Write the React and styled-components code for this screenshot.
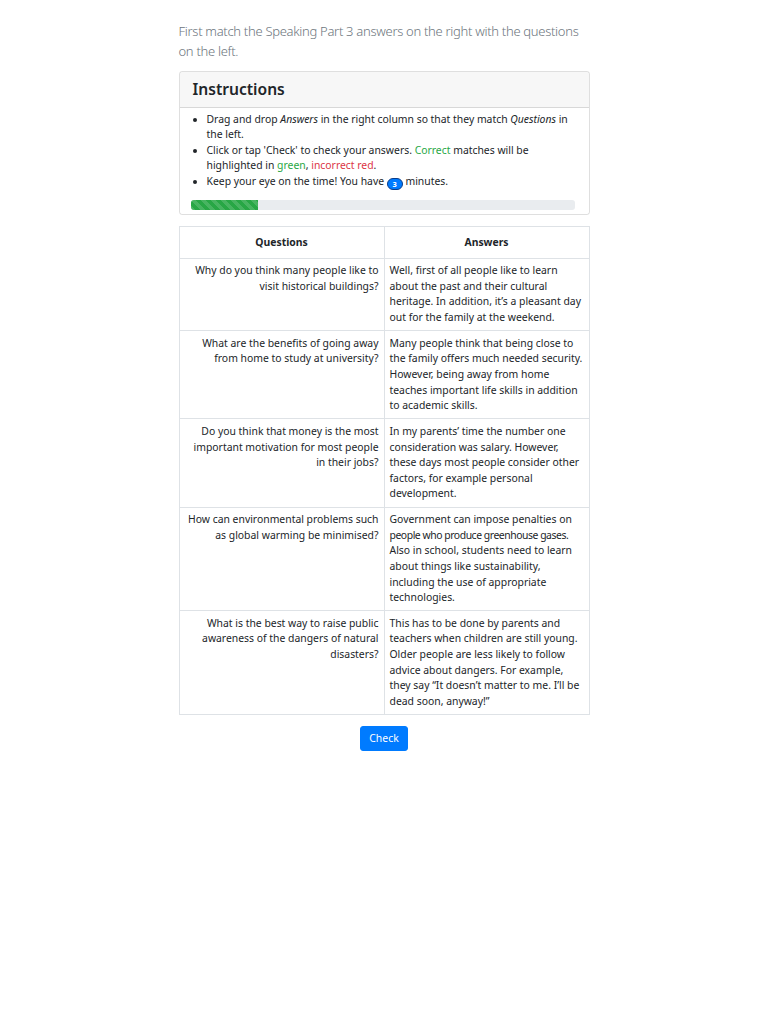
import React from "react";
import styled, { createGlobalStyle } from "styled-components";

const Global = createGlobalStyle`
  html, body { margin: 0; padding: 0; background: #fff; }
  body {
    font-family: "Noto Sans", "Open Sans", "Liberation Sans", sans-serif;
    font-size: 10.4px;
    line-height: 15.6px;
    color: #212529;
  }
  * { box-sizing: border-box; }
`;

const Container = styled.div`
  width: 411px;
  margin: 0 auto;
  padding-top: 22px;
  padding-bottom: 40px;
`;

const Lead = styled.p`
  margin: 0 0 10px;
  font-size: 13px;
  line-height: 19.5px;
  font-weight: 300;
  letter-spacing: -0.3px;
  color: #6c757d;
`;

const Card = styled.div`
  border: 1px solid rgba(0, 0, 0, 0.125);
  border-radius: 3px;
  overflow: hidden;
`;

const CardHeader = styled.div`
  background: rgba(0, 0, 0, 0.03);
  border-bottom: 1px solid rgba(0, 0, 0, 0.125);
  padding: 8px 13px;
`;

const CardTitle = styled.h4`
  margin: 0;
  font-size: 15.6px;
  line-height: 18.7px;
  font-weight: 600;
  color: #212529;
`;

const CardBody = styled.div`
  padding: 4px 14px 4px 11px;
`;

const List = styled.ul`
  margin: 0 0 10px;
  padding-left: 16px;
  li { margin: 0; }
`;

const Em = styled.em`
  font-style: italic;
`;

const Colored = styled.span`
  color: ${(p) => p.$c};
`;

const Badge = styled.span`
  display: inline-block;
  min-width: 16px;
  height: 12px;
  padding: 0 4px;
  border-radius: 6px;
  background: #007bff;
  border: 1px solid #0a3d8a;
  color: #fff;
  font-size: 7.5px;
  line-height: 10px;
  font-weight: 700;
  text-align: center;
  vertical-align: -2px;
`;

const Progress = styled.div`
  height: 10px;
  background: #e9ecef;
  border-radius: 3px;
  overflow: hidden;
`;

const ProgressBar = styled.div`
  height: 100%;
  background-color: #28a745;
  background-image: linear-gradient(
    45deg,
    rgba(255, 255, 255, 0.15) 25%,
    transparent 25%,
    transparent 50%,
    rgba(255, 255, 255, 0.15) 50%,
    rgba(255, 255, 255, 0.15) 75%,
    transparent 75%,
    transparent
  );
  background-size: 10px 10px;
`;

const Table = styled.table`
  width: 100%;
  margin-top: 11px;
  border-collapse: collapse;
  table-layout: fixed;
  border: 1px solid #dee2e6;
`;

const Th = styled.th`
  border: 1px solid #dee2e6;
  padding: 7.5px 6px;
  font-weight: 700;
  text-align: center;
`;

const Td = styled.td`
  border: 1px solid #dee2e6;
  padding: 4.6px 5px;
  vertical-align: top;
  text-align: ${(p) => (p.$right ? "right" : "left")};
`;

const Tight = styled.span`
  letter-spacing: -0.45px;
`;

const ButtonRow = styled.div`
  display: flex;
  justify-content: center;
  margin-top: 11px;
`;

const Button = styled.button`
  font-family: inherit;
  font-size: 10.4px;
  line-height: 15.6px;
  color: #fff;
  background: #007bff;
  border: 1px solid #007bff;
  border-radius: 3px;
  padding: 3.5px 8.5px;
  cursor: pointer;
`;

const rows = [
  [
    "Why do you think many people like to visit historical buildings?",
    "Well, first of all people like to learn about the past and their cultural heritage. In addition, it\u2019s a pleasant day out for the family at the weekend.",
  ],
  [
    "What are the benefits of going away from home to study at university?",
    "Many people think that being close to the family offers much needed security. However, being away from home teaches important life skills in addition to academic skills.",
  ],
  [
    "Do you think that money is the most important motivation for most people in their jobs?",
    "In my parents\u2019 time the number one consideration was salary. However, these days most people consider other factors, for example personal development.",
  ],
  [
    "How can environmental problems such as global warming be minimised?",
    <>
      Government can impose penalties on{" "}
      <Tight>people who produce greenhouse gases.</Tight> Also in school,
      students need to learn about things like sustainability, including the
      use of appropriate technologies.
    </>,
  ],
  [
    "What is the best way to raise public awareness of the dangers of natural disasters?",
    "This has to be done by parents and teachers when children are still young. Older people are less likely to follow advice about dangers. For example, they say \u201cIt doesn\u2019t matter to me. I\u2019ll be dead soon, anyway!\u201d",
  ],
];

export default function App() {
  return (
    <>
      <Global />
      <Container>
        <Lead>
          First match the Speaking Part 3 answers on the right with the
          questions on the left.
        </Lead>
        <Card>
          <CardHeader>
            <CardTitle>Instructions</CardTitle>
          </CardHeader>
          <CardBody>
            <List>
              <li>
                Drag and drop <Em>Answers</Em> in the right column so that they
                match <Em>Questions</Em> in the left.
              </li>
              <li>
                Click or tap 'Check' to check your answers.{" "}
                <Colored $c="#28a745">Correct</Colored> matches will be
                highlighted in <Colored $c="#28a745">green</Colored>,{" "}
                <Colored $c="#dc3545">incorrect red</Colored>.
              </li>
              <li>
                Keep your eye on the time! You have <Badge>3</Badge> minutes.
              </li>
            </List>
            <Progress>
              <ProgressBar style={{ width: "17.7%" }} />
            </Progress>
          </CardBody>
        </Card>
        <Table>
          <thead>
            <tr>
              <Th>Questions</Th>
              <Th>Answers</Th>
            </tr>
          </thead>
          <tbody>
            {rows.map(([q, a], i) => (
              <tr key={i}>
                <Td $right>{q}</Td>
                <Td>{a}</Td>
              </tr>
            ))}
          </tbody>
        </Table>
        <ButtonRow>
          <Button>Check</Button>
        </ButtonRow>
      </Container>
    </>
  );
}
